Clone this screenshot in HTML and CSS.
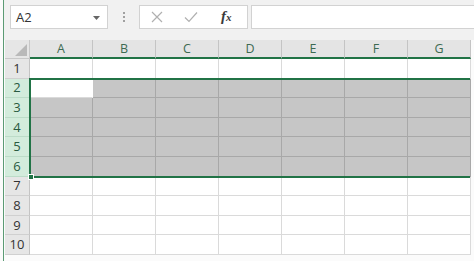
FILE: index.html
```html
<!DOCTYPE html>
<html>
<head>
<meta charset="utf-8">
<link rel="stylesheet" href="styles.css">
</head>
<body>
<div class="app">
  <div class="toolbar">
    <div class="namebox">
      <span class="ref">A2</span>
      <svg class="caret" width="7" height="4" viewBox="0 0 7 4"><path d="M0 0H7L3.5 4Z" fill="#666"/></svg>
    </div>
    <div class="dots"><i></i><i></i><i></i></div>
    <div class="buttons">
      <svg class="btn-x" width="12" height="12" viewBox="0 0 12 12"><path d="M1 1L11 11M11 1L1 11" stroke="#b0b0b0" stroke-width="1.2" fill="none"/></svg>
      <svg class="btn-ok" width="14" height="12" viewBox="0 0 14 12"><path d="M1 6.5L5 10.5L13 1.5" stroke="#b0b0b0" stroke-width="1.2" fill="none"/></svg>
      <span class="fx"><span class="f">f</span><span class="x">x</span></span>
    </div>
    <div class="formula"></div>
  </div>
  <div class="sheet">
    <div class="corner"><svg width="12" height="12" viewBox="0 0 12 12"><path d="M12 0V12H0Z" fill="#b9b9b9"/></svg></div>
    <div class="ch">A</div><div class="ch">B</div><div class="ch">C</div><div class="ch">D</div><div class="ch">E</div><div class="ch">F</div><div class="ch">G</div>

    <div class="rh">1</div><div class="c"></div><div class="c"></div><div class="c"></div><div class="c"></div><div class="c"></div><div class="c"></div><div class="c"></div>

    <div class="rh sel">2</div><div class="c active"></div><div class="c sel"></div><div class="c sel"></div><div class="c sel"></div><div class="c sel"></div><div class="c sel"></div><div class="c sel"></div>
    <div class="rh sel">3</div><div class="c sel"></div><div class="c sel"></div><div class="c sel"></div><div class="c sel"></div><div class="c sel"></div><div class="c sel"></div><div class="c sel"></div>
    <div class="rh sel">4</div><div class="c sel"></div><div class="c sel"></div><div class="c sel"></div><div class="c sel"></div><div class="c sel"></div><div class="c sel"></div><div class="c sel"></div>
    <div class="rh sel">5</div><div class="c sel"></div><div class="c sel"></div><div class="c sel"></div><div class="c sel"></div><div class="c sel"></div><div class="c sel"></div><div class="c sel"></div>
    <div class="rh sel">6</div><div class="c sel"></div><div class="c sel"></div><div class="c sel"></div><div class="c sel"></div><div class="c sel"></div><div class="c sel"></div><div class="c sel"></div>

    <div class="rh">7</div><div class="c"></div><div class="c"></div><div class="c"></div><div class="c"></div><div class="c"></div><div class="c"></div><div class="c"></div>
    <div class="rh">8</div><div class="c"></div><div class="c"></div><div class="c"></div><div class="c"></div><div class="c"></div><div class="c"></div><div class="c"></div>
    <div class="rh">9</div><div class="c"></div><div class="c"></div><div class="c"></div><div class="c"></div><div class="c"></div><div class="c"></div><div class="c"></div>
    <div class="rh">10</div><div class="c"></div><div class="c"></div><div class="c"></div><div class="c"></div><div class="c"></div><div class="c"></div><div class="c"></div>

    <div class="selection"><span class="handle"></span></div>
  </div>
</div>
</body>
</html>
```
FILE: styles.css
```css
* { box-sizing: border-box; }
html, body { margin: 0; padding: 0; }
body {
  width: 474px;
  height: 261px;
  overflow: hidden;
  background: #fbfbfb;
  font-family: "Open Sans", "Noto Sans", sans-serif;
}
.app {
  margin-left: 3px;
  border-left: 1px solid #5b9b74;
  height: 261px;
  background: #fbfbfb;
}
.toolbar {
  height: 40px;
  background: #f1f1f1;
  display: flex;
  align-items: flex-start;
  padding-top: 5px;
}
.namebox {
  margin-left: 6px;
  width: 98px;
  height: 24px;
  background: #fff;
  border: 1px solid #d2d2d2;
  display: flex;
  align-items: center;
  justify-content: space-between;
  padding: 0 7px 0 5px;
}
.ref { font-size: 13px; color: #333; }
.caret { margin-top: 1px; }
.dots {
  width: 31px;
  height: 24px;
  display: flex;
  flex-direction: column;
  align-items: center;
  justify-content: center;
  gap: 2px;
}
.dots i {
  display: block;
  width: 2px;
  height: 2px;
  background: #a0a0a0;
}
.buttons {
  width: 109px;
  height: 24px;
  background: #fff;
  border: 1px solid #d2d2d2;
  display: flex;
  align-items: center;
  padding-left: 11px;
}
.btn-ok { margin-left: 21px; }
.fx {
  margin-left: 23px;
  font-family: "Liberation Serif", "DejaVu Serif", serif;
  font-style: italic;
  font-weight: bold;
  color: #3a3a3a;
  font-size: 15px;
  line-height: 1;
  margin-top: -2px;
}
.fx .x { font-size: 11px; }
.formula {
  margin-left: 3px;
  flex: 1;
  height: 24px;
  background: #fff;
  border: 1px solid #d2d2d2;
  border-right: none;
}
.sheet {
  position: relative;
  margin-left: 1px;
  display: grid;
  grid-template-columns: 25px repeat(7, 63px);
  grid-template-rows: 19px repeat(10, 19.6px);
  width: 466px;
}
.corner {
  background: #e6e6e6;
  border-right: 1px solid #c8c8c8;
  border-bottom: 1px solid #c8c8c8;
  display: flex;
  align-items: flex-end;
  justify-content: flex-end;
  padding: 0 2px 2px 0;
}
.ch {
  background: #e4e4e4;
  border-right: 1px solid #c4c4c4;
  border-bottom: 2px solid #217346;
  color: #3d6a52;
  font-size: 12.5px;
  display: flex;
  align-items: center;
  justify-content: center;
  line-height: 1;
  padding-top: 1px;
}
.rh {
  background: #e6e6e6;
  border-bottom: 1px solid #d0d0d0;
  border-right: 1px solid #c4c4c4;
  color: #333;
  font-size: 13px;
  display: flex;
  align-items: center;
  justify-content: center;
  line-height: 1;
}
.rh.sel {
  background: #d3ecdc;
  color: #2a5a40;
  border-bottom-color: #bcdcc8;
}
.c {
  background: #fff;
  border-right: 1px solid #dadada;
  border-bottom: 1px solid #dadada;
}
.c.sel {
  background: #c6c6c6;
  border-right-color: #a8a8a8;
  border-bottom-color: #a8a8a8;
}
.c.active { background: #fff; border-right-color: #fff; }
.selection {
  position: absolute;
  left: 24px;
  top: 37.6px;
  width: 441px;
  height: 100px;
  border: 2px solid #217346;
  border-right: none;
  pointer-events: none;
}
.handle {
  position: absolute;
  left: -3px;
  bottom: -4px;
  width: 6px;
  height: 6px;
  background: #217346;
  border: 1px solid #fff;
}
```
